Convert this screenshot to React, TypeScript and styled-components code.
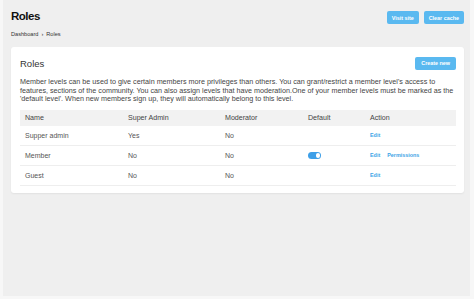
import React from "react";
import styled, { createGlobalStyle } from "styled-components";

const Global = createGlobalStyle`
  html, body { margin: 0; padding: 0; background: #f7f7f7; }
  body { font-family: "Liberation Sans", Arial, sans-serif; }
  * { box-sizing: border-box; }
`;

const Frame = styled.div`
  width: 474px;
  height: 299px;
  padding: 0 4px 3px 3px;
`;

const Page = styled.main`
  background: #efefef;
  height: 100%;
  padding: 0 6px 0 8px;
`;

const Header = styled.header`
  display: flex;
  justify-content: space-between;
  align-items: flex-start;
  padding-top: 9px;
  height: 47px;
`;

const TitleBlock = styled.div`
  display: flex;
  flex-direction: column;
`;

const Title = styled.h1`
  margin: 0;
  font-size: 11.5px;
  line-height: 15px;
  font-weight: 700;
  letter-spacing: -0.5px;
  color: #111;
`;

const Crumbs = styled.div`
  margin-top: 7px;
  font-size: 5.6px;
  color: #333;
  display: flex;
  gap: 3px;
`;

const Actions = styled.div`
  display: flex;
  gap: 5px;
  padding-top: 2px;
`;

const Btn = styled.button<{ $px?: number }>`
  border: none;
  background: #5ab9f0;
  color: #fff;
  font-family: inherit;
  font-weight: 700;
  font-size: 5.4px;
  height: 13px;
  padding: 0 ${(p) => p.$px ?? 5}px;
  border-radius: 2px;
  cursor: pointer;
`;

const Card = styled.section`
  background: #fff;
  border-radius: 3px;
  box-shadow: 0 1px 2px rgba(0, 0, 0, 0.06);
  padding: 8px 8px 7px 9px;
  width: 453px;
`;

const CardHead = styled.div`
  display: flex;
  justify-content: space-between;
  align-items: center;
  height: 14px;
  margin-top: 1px;
`;

const CardTitle = styled.h2`
  margin: 0;
  font-size: 9.5px;
  font-weight: 400;
  color: #333;
`;

const Desc = styled.p`
  margin: 8px 0 0;
  font-size: 7.2px;
  line-height: 8.6px;
  color: #444;
  width: 434px;
`;

const Table = styled.div`
  margin-top: 6px;
  display: grid;
  grid-template-columns: 103px 97px 83px 62px 1fr;
`;

const HeadCell = styled.div`
  background: #f2f2f2;
  height: 16px;
  display: flex;
  align-items: center;
  padding-left: 5px;
  font-size: 7.1px;
  color: #444;
`;

const Cell = styled.div`
  height: 20px;
  display: flex;
  align-items: center;
  padding-left: 5px;
  font-size: 7px;
  color: #555;
  border-bottom: 1px solid #eee;
  gap: 7px;
`;

const Link = styled.a`
  color: #3da3e6;
  font-size: 5.4px;
  font-weight: 700;
  text-decoration: none;
`;

const Toggle = styled.span`
  width: 13px;
  height: 6.5px;
  border-radius: 4px;
  background: #3d9fe8;
  position: relative;
  display: inline-block;
  &::after {
    content: "";
    position: absolute;
    right: 1px;
    top: 1px;
    width: 4.5px;
    height: 4.5px;
    border-radius: 50%;
    background: #fff;
  }
`;

const rows = [
  { name: "Supper admin", sa: "Yes", mod: "No", def: false, perms: false },
  { name: "Member", sa: "No", mod: "No", def: true, perms: true },
  { name: "Guest", sa: "No", mod: "No", def: false, perms: false },
];

export default function App() {
  return (
    <>
      <Global />
      <Frame>
        <Page>
          <Header>
            <TitleBlock>
              <Title>Roles</Title>
              <Crumbs>
                <span>Dashboard</span>
                <span>›</span>
                <span>Roles</span>
              </Crumbs>
            </TitleBlock>
            <Actions>
              <Btn $px={5}>Visit site</Btn>
              <Btn $px={5}>Clear cache</Btn>
            </Actions>
          </Header>
          <Card>
            <CardHead>
              <CardTitle>Roles</CardTitle>
              <Btn $px={6}>Create new</Btn>
            </CardHead>
            <Desc>
              Member levels can be used to give certain members more privileges than others. You can
              grant/restrict a member level's access to features, sections of the community. You can also
              assign levels that have moderation.One of your member levels must be marked as the 'default
              level'. When new members sign up, they will automatically belong to this level.
            </Desc>
            <Table>
              <HeadCell>Name</HeadCell>
              <HeadCell>Super Admin</HeadCell>
              <HeadCell>Moderator</HeadCell>
              <HeadCell>Default</HeadCell>
              <HeadCell>Action</HeadCell>
              {rows.map((r) => (
                <React.Fragment key={r.name}>
                  <Cell>{r.name}</Cell>
                  <Cell>{r.sa}</Cell>
                  <Cell>{r.mod}</Cell>
                  <Cell>{r.def && <Toggle />}</Cell>
                  <Cell>
                    <Link>Edit</Link>
                    {r.perms && <Link>Permissions</Link>}
                  </Cell>
                </React.Fragment>
              ))}
            </Table>
          </Card>
        </Page>
      </Frame>
    </>
  );
}
